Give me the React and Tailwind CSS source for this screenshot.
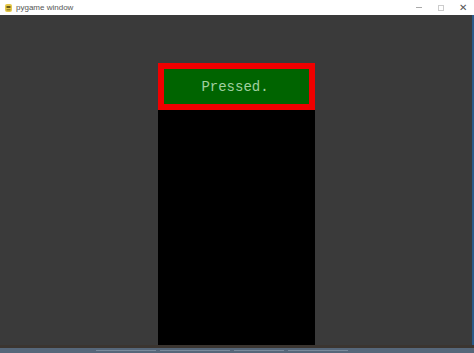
import React from "react";

const PygameIcon = () => (
    <svg width="9" height="10" viewBox="0 0 9 10">
        <rect x="1" y="1" width="7" height="8" rx="2" fill="#e6c94a" />
        <rect x="2.5" y="3" width="4" height="2" fill="#6b5b1c" />
        <rect x="2.5" y="6" width="4" height="1.5" fill="#a08a2c" />
    </svg>
);

const App = () => {
    return (
        <div className="w-[474px] h-[353px] flex flex-col bg-[#3a3a3a] overflow-hidden" style={{ fontFamily: "'Liberation Sans', Arial, sans-serif" }}>
            {/* title bar */}
            <div className="h-[15px] bg-white flex items-center shrink-0">
                <div className="pl-[4px] flex items-center gap-[3px]">
                    <PygameIcon />
                    <span className="text-[8px] text-[#555] leading-none">pygame window</span>
                </div>
                <div className="ml-auto flex items-center h-full">
                    <div className="w-[22px] flex justify-center"><div className="w-[6px] h-px bg-[#aaa]" /></div>
                    <div className="w-[22px] flex justify-center"><div className="w-[6px] h-[6px] border border-[#ccc]" /></div>
                    <div className="w-[22px] flex justify-center text-[10px] text-[#555] leading-none">✕</div>
                </div>
            </div>

            {/* game surface */}
            <div className="flex-1 flex">
                <div className="flex-1 flex justify-center pt-[48px]">
                    <div className="w-[157px] flex flex-col bg-black">
                        <div className="h-[47px] border-[6px] border-[#f00000] bg-[#006400] flex items-center justify-center pr-[2px]">
                            <span className="text-[14px] text-[#a0d0a0] leading-none" style={{ fontFamily: "'Liberation Mono', 'Courier New', monospace" }}>Pressed.</span>
                        </div>
                    </div>
                </div>
                <div className="w-[2px] bg-[#2a5a8a]" />
            </div>

            {/* taskbar edge */}
            <div className="h-[3px] bg-[#3b3530]" />
            <div className="h-[5px] bg-[#56677a] flex items-center pl-[96px] gap-[4px]">
                <div className="w-[60px] h-px bg-[#7a8b9c]" />
                <div className="w-[70px] h-px bg-[#7a8b9c]" />
                <div className="w-[50px] h-px bg-[#7a8b9c]" />
                <div className="w-[60px] h-px bg-[#7a8b9c]" />
            </div>
        </div>
    );
};

export default App;
